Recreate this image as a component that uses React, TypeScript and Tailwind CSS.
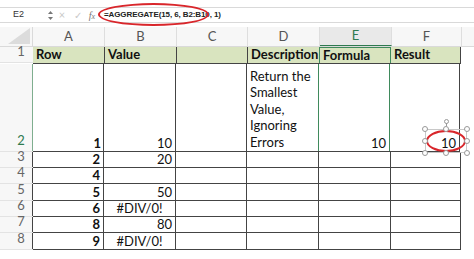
import React from "react";

const cols = [
  { l: "A", w: "w-[72px]" },
  { l: "B", w: "w-[72px]" },
  { l: "C", w: "w-[71px]" },
  { l: "D", w: "w-[72px]" },
  { l: "E", w: "w-[72px]" },
  { l: "F", w: "w-[70px]" },
];

type Cell = { t?: string; align?: "r" | "l" | "c"; bold?: boolean };

const rows: { n: number; h: string; cells: Cell[] }[] = [
  { n: 3, h: "h-[16px]", cells: [{ t: "2", align: "r" }, { t: "20", align: "r" }, {}, {}, {}, {}] },
  { n: 4, h: "h-[16px]", cells: [{ t: "4", align: "r" }, {}, {}, {}, {}, {}] },
  { n: 5, h: "h-[17px]", cells: [{ t: "5", align: "r" }, { t: "50", align: "r" }, {}, {}, {}, {}] },
  { n: 6, h: "h-[16px]", cells: [{ t: "6", align: "r" }, { t: "#DIV/0!", align: "c" }, {}, {}, {}, {}] },
  { n: 7, h: "h-[16px]", cells: [{ t: "8", align: "r" }, { t: "80", align: "r" }, {}, {}, {}, {}] },
  { n: 8, h: "h-[17px]", cells: [{ t: "9", align: "r" }, { t: "#DIV/0!", align: "c" }, {}, {}, {}, {}] },
];

function RowHead({ n, h, active }: { n: number; h: string; active?: boolean }) {
  return (
    <div
      className={`w-[33px] ${h} shrink-0 flex items-end justify-center pb-[1px] pl-[10px] pr-[1px] bg-[#f7f7f7] border-b border-[#e3e3e3] text-[13px] ${
        active ? "text-[#2f7a4f] bg-[#ececec]" : "text-[#666]"
      }`}
    >
      {n}
    </div>
  );
}

export default function App() {
  return (
    <div
      className="w-[474px] h-[259px] bg-white overflow-hidden relative text-[#111]"
      style={{ fontFamily: "Lato, 'Open Sans', sans-serif" }}
    >
      {/* top spacer */}
      <div className="h-[7px] bg-white" />
      {/* formula bar */}
      <div className="h-[16px] flex items-center border-y border-[#d9d9d9] text-[9px] text-[#333] bg-white">
        <div className="w-[44px] shrink-0 pl-[13px]" style={{ fontFamily: "'Liberation Sans', sans-serif" }}>E2</div>
        <div className="w-[12px] shrink-0 flex items-center justify-center">
          <svg width="5" height="9" viewBox="0 0 5 9">
            <polygon points="2.5,0 5,3 0,3" fill="#777" />
            <polygon points="0,6 5,6 2.5,9" fill="#777" />
          </svg>
        </div>
        <div className="w-[12px] shrink-0 text-center text-[#c8c8c8] text-[11px]">×</div>
        <div className="w-[4px] shrink-0" />
        <div className="w-[12px] shrink-0 text-center text-[#c8c8c8] text-[10px]">✓</div>
        <div className="w-[1px] shrink-0" />
        <div
          className="w-[14px] shrink-0 text-center text-[#777] text-[10px] italic"
          style={{ fontFamily: "'Liberation Serif', serif" }}
        >
          f<span className="text-[8px]">x</span>
        </div>
        <div
          className="shrink-0 pl-[5px] text-[8px] font-bold text-[#222] tracking-[-0.1px]"
          style={{ fontFamily: "'Liberation Sans', sans-serif" }}
        >
          =AGGREGATE(15, 6, B2:B10, 1)
        </div>
      </div>
      {/* gap */}
      <div className="h-[4px] bg-white" />
      {/* column headers */}
      <div className="flex h-[20px] bg-[#f7f7f7] border-b border-[#dadada]">
        <div className="w-[33px] shrink-0 relative border-r border-[#dadada]">
          <svg className="absolute right-[2px] bottom-[2px]" width="22" height="16" viewBox="0 0 22 16">
            <polygon points="22,0 22,16 0,16" fill="#dcdcdc" />
          </svg>
        </div>
        {cols.map((c) => (
          <div
            key={c.l}
            className={`${c.w} shrink-0 flex items-center justify-center text-[13px] border-r border-[#dedede] ${
              c.l === "E" ? "bg-[#e9e9e9] text-[#2f7a4f] border-b border-b-[#2f7a4f]" : "text-[#555]"
            }`}
          >
            {c.l}
          </div>
        ))}
        <div className="flex-1" />
      </div>

      {/* row 1 */}
      <div className="flex">
        <RowHead n={1} h="h-[16px]" />
        <div className="flex bg-[#d9e4bf] border-b border-[#444] text-[13px] font-bold leading-[15px]">
          <div className="w-[72px] shrink-0 border-r border-[#444] pl-[3px]">Row</div>
          <div className="w-[72px] shrink-0 border-r border-[#444] pl-[3px]">Value</div>
          <div className="w-[71px] shrink-0 border-r border-[#444]" />
          <div className="w-[72px] shrink-0 border-r border-[#444] pl-[3px]">Description</div>
          <div className="w-[72px] shrink-0 border border-[#3f8a5c] border-b-0 pl-[3px] -ml-px">Formula</div>
          <div className="w-[70px] shrink-0 border-r border-[#444] pl-[3px]">Result</div>
        </div>
      </div>

      {/* row 2 */}
      <div className="flex">
        <RowHead n={2} h="h-[88px]" active />
        <div className="flex border-b border-[#444] text-[13px] leading-[16.5px]">
          <div className="w-[72px] shrink-0 border-r border-l border-l-[#7fae8f] border-[#444] -ml-px flex items-end justify-end pr-[2px] font-bold">
            1
          </div>
          <div className="w-[72px] shrink-0 border-r border-[#444] flex items-end justify-end pr-[3px]">10</div>
          <div className="w-[71px] shrink-0 border-r border-[#444]" />
          <div className="w-[72px] shrink-0 border-r border-[#444] flex items-end pl-[3px] pb-[1px]">
            <div>
              Return the
              <br />
              Smallest
              <br />
              Value,
              <br />
              Ignoring
              <br />
              Errors
            </div>
          </div>
          <div className="w-[72px] shrink-0 border-x border-[#3f8a5c] -ml-px flex items-end justify-end pr-[3px]">
            10
          </div>
          <div className="w-[70px] shrink-0 border-r border-[#444] flex items-end justify-end pr-[3px] relative">
            10
          </div>
        </div>
      </div>

      {/* rows 3..8 */}
      {rows.map((r) => (
        <div className="flex" key={r.n}>
          <RowHead n={r.n} h={r.h} />
          <div className={`flex border-b border-[#444] text-[13px] ${r.h}`}>
            {r.cells.map((c, i) => (
              <div
                key={i}
                className={`${cols[i].w} shrink-0 border-r border-[#444] ${i === 0 ? "border-l -ml-px" : ""} flex items-end ${
                  c.align === "r" ? "justify-end pr-[3px]" : c.align === "c" ? "justify-center" : "pl-[3px]"
                } ${i === 0 ? "font-bold pr-[2px]" : ""} leading-[15px]`}
              >
                {c.t}
              </div>
            ))}
          </div>
        </div>
      ))}

      {/* red ellipse around formula */}
      <div className="absolute left-[98px] top-[3px] w-[111px] h-[23px] rounded-[50%] border-2 border-[#d9262b]" />

      {/* red ellipse around result with selection handles */}
      <div className="absolute left-[425px] top-[129px] w-[42px] h-[24px]">
        <div className="absolute inset-[1px] rounded-[50%] border-2 border-[#d9262b]" />
        <div className="absolute inset-0 border border-[#c8c8c8]" />
        {[
          "left-[-3px] top-[-3px]",
          "left-[18px] top-[-3px]",
          "right-[-3px] top-[-3px]",
          "left-[-3px] top-[9px]",
          "right-[-3px] top-[9px]",
          "left-[-3px] bottom-[-3px]",
          "left-[18px] bottom-[-3px]",
          "right-[-3px] bottom-[-3px]",
        ].map((p) => (
          <div key={p} className={`absolute ${p} w-[6px] h-[6px] rounded-full bg-white border border-[#999]`} />
        ))}
        <div className="absolute left-[19px] top-[-10px] w-[5px] h-[5px] rounded-full bg-white border border-[#999]" />
        <div className="absolute left-[21px] top-[-6px] w-px h-[3px] bg-[#999]" />
      </div>
    </div>
  );
}
